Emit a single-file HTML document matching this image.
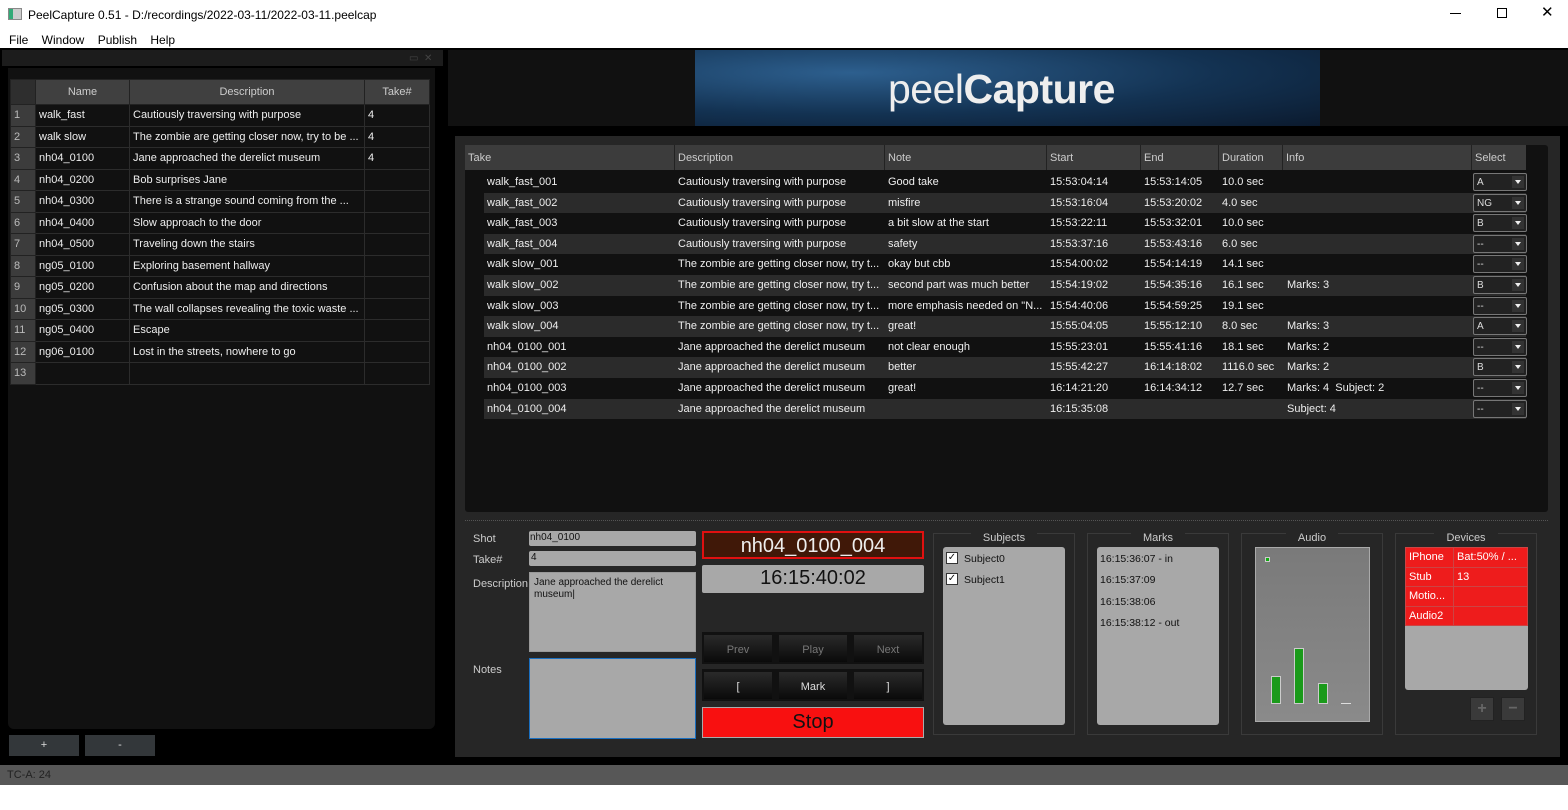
<!DOCTYPE html>
<html><head><meta charset="utf-8"><style>
*{box-sizing:border-box;margin:0;padding:0}
body{width:1568px;height:810px;background:#fff;position:relative;overflow:hidden;font-family:"Liberation Sans",sans-serif;font-size:11px;color:#ddd}
.a{position:absolute}
.t{white-space:nowrap;overflow:hidden}
table{border-collapse:collapse}
.lt td{height:21.5px;border:1px solid #2c2c2c;padding:0 3px;color:#eee;font-size:11px;white-space:nowrap;overflow:hidden}
.lt td.n{background:#3c3c3c;color:#bbb;border-color:#222;width:25px}
.lt th{background:#404040;color:#ccc;font-weight:normal;height:25px;border:1px solid #222}
.row{position:absolute;left:484px;width:1042px;height:20.6px;font-size:11px;color:#eee}
.row span{position:absolute;top:4px;white-space:nowrap}
.row.alt{background:#2b2b2b}
.sel{position:absolute;left:989px;top:1px;width:54px;height:18px;border:1px solid #777;border-radius:2px;background:#222;color:#ddd;font-size:10px;padding:3px 0 0 3px}
.sel:after{content:"";position:absolute;right:2px;top:2px;width:12px;height:12px;background:#333}
.sel:before{content:"";position:absolute;right:5px;top:6px;border:3px solid transparent;border-top:4px solid #eee;z-index:2}
.btn{position:absolute;background:linear-gradient(#2a2a2a,#0a0a0a);border:1px solid #111;color:#777;text-align:center;font-size:11px}
.grp{position:absolute;border:1px solid #3a3a3a;top:533px;height:202px;width:142px}
.grp .ttl{position:absolute;top:-2px;left:0;right:0;text-align:center;color:#ccc;font-size:11px}
.grp .ttl span{background:#262626;padding:0 12px}
.lst{position:absolute;background:#a8a8a8;border-radius:3px;color:#111;font-size:10.5px}
.dev td{height:19.5px;border:1px solid #c44;background:#ee1c1c;color:#fff;font-size:11px;padding:0 3px;white-space:nowrap}
</style></head><body>
<!-- title bar -->
<div class="a" style="left:0;top:0;width:1568px;height:48px;background:#fff;color:#000"></div>
<div class="a" style="left:8px;top:8px;width:14px;height:12px;border:1px solid #888;background:linear-gradient(90deg,#3a7 0 35%,#ccc 35%)"></div>
<div class="a t" style="left:28px;top:8px;color:#000;font-size:12px">PeelCapture 0.51 - D:/recordings/2022-03-11/2022-03-11.peelcap</div>
<div class="a" style="left:1450px;top:13px;width:11px;height:1px;background:#000"></div>
<div class="a" style="left:1497px;top:8px;width:10px;height:10px;border:1px solid #000"></div>
<div class="a" style="left:1541px;top:3px;color:#000;font-size:15px">✕</div>
<div class="a t" style="left:9px;top:33px;color:#000;font-size:12px;word-spacing:0">File &nbsp;&nbsp;&nbsp;Window &nbsp;&nbsp;&nbsp;Publish &nbsp;&nbsp;&nbsp;Help</div>
<!-- dark area -->
<div class="a" style="left:0;top:48px;width:1568px;height:717px;background:#000"></div>
<div class="a" style="left:2px;top:50px;width:441px;height:16px;background:#1c1c1c"></div>
<div class="a" style="left:409px;top:53px;color:#444;font-size:10px">▭ &nbsp;✕</div>
<div class="a" style="left:8px;top:68px;width:427px;height:661px;background:#111;border-radius:0 0 6px 6px"></div>
<table class="lt a" style="left:10px;top:79px;width:419px;table-layout:fixed">
<colgroup><col style="width:25px"><col style="width:94px"><col style="width:235px"><col style="width:65px"></colgroup>
<tr><th style="background:#2e2e2e"></th><th>Name</th><th>Description</th><th>Take#</th></tr>
<tr><td class="n">1</td><td>walk_fast</td><td>Cautiously traversing with purpose</td><td>4</td></tr>
<tr><td class="n">2</td><td>walk slow</td><td>The zombie are getting closer now, try to be ...</td><td>4</td></tr>
<tr><td class="n">3</td><td>nh04_0100</td><td>Jane approached the derelict museum</td><td>4</td></tr>
<tr><td class="n">4</td><td>nh04_0200</td><td>Bob surprises Jane</td><td></td></tr>
<tr><td class="n">5</td><td>nh04_0300</td><td>There is a strange sound coming from the ...</td><td></td></tr>
<tr><td class="n">6</td><td>nh04_0400</td><td>Slow approach to the door</td><td></td></tr>
<tr><td class="n">7</td><td>nh04_0500</td><td>Traveling down the stairs</td><td></td></tr>
<tr><td class="n">8</td><td>ng05_0100</td><td>Exploring basement hallway</td><td></td></tr>
<tr><td class="n">9</td><td>ng05_0200</td><td>Confusion about the map and directions</td><td></td></tr>
<tr><td class="n">10</td><td>ng05_0300</td><td>The wall collapses revealing the toxic waste ...</td><td></td></tr>
<tr><td class="n">11</td><td>ng05_0400</td><td>Escape</td><td></td></tr>
<tr><td class="n">12</td><td>ng06_0100</td><td>Lost in the streets, nowhere to go</td><td></td></tr>
<tr><td class="n">13</td><td></td><td></td><td></td></tr>
</table>
<div class="a" style="left:9px;top:735px;width:70px;height:21px;background:#33373a;color:#ddd;text-align:center;padding-top:4px">+</div>
<div class="a" style="left:85px;top:735px;width:70px;height:21px;background:#33373a;color:#ddd;text-align:center;padding-top:4px">-</div>
<!-- logo -->
<div class="a" style="left:448px;top:50px;width:1120px;height:76px;background:#111"></div>
<div class="a" style="left:695px;top:50px;width:625px;height:76px;background:radial-gradient(ellipse at 25% 30%,#2d5f8e,#133252 55%,#0b1a2e)"></div>
<div class="a t" style="left:888px;top:66px;color:#eee;font-size:41px;letter-spacing:-0.5px">peel<b>Capture</b></div>
<!-- main panel -->
<div class="a" style="left:455px;top:136px;width:1105px;height:621px;background:#262626"></div>
<div class="a" style="left:465px;top:145px;width:1083px;height:367px;background:#111;border-radius:3px"></div>
<div class="a" style="left:465px;top:145px;width:1061px;height:25px;background:#3c3c3c"></div>
<div class="a t" style="left:465px;top:145px;height:25px;width:1061px;color:#ccc;font-size:11px">
<span class="a" style="left:3px;top:7px">Take</span>
<span class="a" style="left:209px;top:0;height:25px;border-left:1px solid #222;padding:7px 3px">Description</span>
<span class="a" style="left:419px;top:0;height:25px;border-left:1px solid #222;padding:7px 3px">Note</span>
<span class="a" style="left:581px;top:0;height:25px;border-left:1px solid #222;padding:7px 3px">Start</span>
<span class="a" style="left:675px;top:0;height:25px;border-left:1px solid #222;padding:7px 3px">End</span>
<span class="a" style="left:753px;top:0;height:25px;border-left:1px solid #222;padding:7px 3px">Duration</span>
<span class="a" style="left:817px;top:0;height:25px;border-left:1px solid #222;padding:7px 3px">Info</span>
<span class="a" style="left:1006px;top:0;height:25px;border-left:1px solid #222;padding:7px 3px">Select</span>
</div>
<div class="row" style="top:172px"><span style="left:3px">walk_fast_001</span><span style="left:194px">Cautiously traversing with purpose</span><span style="left:404px">Good take</span><span style="left:566px">15:53:04:14</span><span style="left:660px">15:53:14:05</span><span style="left:738px">10.0 sec</span><div class="sel">A</div></div>
<div class="row alt" style="top:192.6px"><span style="left:3px">walk_fast_002</span><span style="left:194px">Cautiously traversing with purpose</span><span style="left:404px">misfire</span><span style="left:566px">15:53:16:04</span><span style="left:660px">15:53:20:02</span><span style="left:738px">4.0 sec</span><div class="sel">NG</div></div>
<div class="row" style="top:213.2px"><span style="left:3px">walk_fast_003</span><span style="left:194px">Cautiously traversing with purpose</span><span style="left:404px">a bit slow at the start</span><span style="left:566px">15:53:22:11</span><span style="left:660px">15:53:32:01</span><span style="left:738px">10.0 sec</span><div class="sel">B</div></div>
<div class="row alt" style="top:233.8px"><span style="left:3px">walk_fast_004</span><span style="left:194px">Cautiously traversing with purpose</span><span style="left:404px">safety</span><span style="left:566px">15:53:37:16</span><span style="left:660px">15:53:43:16</span><span style="left:738px">6.0 sec</span><div class="sel">--</div></div>
<div class="row" style="top:254.4px"><span style="left:3px">walk slow_001</span><span style="left:194px">The zombie are getting closer now, try t...</span><span style="left:404px">okay but cbb</span><span style="left:566px">15:54:00:02</span><span style="left:660px">15:54:14:19</span><span style="left:738px">14.1 sec</span><div class="sel">--</div></div>
<div class="row alt" style="top:275px"><span style="left:3px">walk slow_002</span><span style="left:194px">The zombie are getting closer now, try t...</span><span style="left:404px">second part was much better</span><span style="left:566px">15:54:19:02</span><span style="left:660px">15:54:35:16</span><span style="left:738px">16.1 sec</span><span style="left:803px">Marks: 3</span><div class="sel">B</div></div>
<div class="row" style="top:295.6px"><span style="left:3px">walk slow_003</span><span style="left:194px">The zombie are getting closer now, try t...</span><span style="left:404px">more emphasis needed on "N...</span><span style="left:566px">15:54:40:06</span><span style="left:660px">15:54:59:25</span><span style="left:738px">19.1 sec</span><div class="sel">--</div></div>
<div class="row alt" style="top:316.2px"><span style="left:3px">walk slow_004</span><span style="left:194px">The zombie are getting closer now, try t...</span><span style="left:404px">great!</span><span style="left:566px">15:55:04:05</span><span style="left:660px">15:55:12:10</span><span style="left:738px">8.0 sec</span><span style="left:803px">Marks: 3</span><div class="sel">A</div></div>
<div class="row" style="top:336.8px"><span style="left:3px">nh04_0100_001</span><span style="left:194px">Jane approached the derelict museum</span><span style="left:404px">not clear enough</span><span style="left:566px">15:55:23:01</span><span style="left:660px">15:55:41:16</span><span style="left:738px">18.1 sec</span><span style="left:803px">Marks: 2</span><div class="sel">--</div></div>
<div class="row alt" style="top:357.4px"><span style="left:3px">nh04_0100_002</span><span style="left:194px">Jane approached the derelict museum</span><span style="left:404px">better</span><span style="left:566px">15:55:42:27</span><span style="left:660px">16:14:18:02</span><span style="left:738px">1116.0 sec</span><span style="left:803px">Marks: 2</span><div class="sel">B</div></div>
<div class="row" style="top:378px"><span style="left:3px">nh04_0100_003</span><span style="left:194px">Jane approached the derelict museum</span><span style="left:404px">great!</span><span style="left:566px">16:14:21:20</span><span style="left:660px">16:14:34:12</span><span style="left:738px">12.7 sec</span><span style="left:803px">Marks: 4 &nbsp;Subject: 2</span><div class="sel">--</div></div>
<div class="row alt" style="top:398.6px"><span style="left:3px">nh04_0100_004</span><span style="left:194px">Jane approached the derelict museum</span><span style="left:566px">16:15:35:08</span><span style="left:803px">Subject: 4</span><div class="sel">--</div></div>
<div class="a" style="left:465px;top:520px;width:1083px;border-top:1px dotted #555"></div>
<!-- shot form -->
<div class="a" style="left:473px;top:533px;color:#ccc">Shot</div>
<div class="a" style="left:473px;top:554px;color:#ccc">Take#</div>
<div class="a" style="left:473px;top:578px;color:#ccc">Description</div>
<div class="a" style="left:473px;top:664px;color:#ccc">Notes</div>
<div class="a" style="left:529px;top:531px;width:167px;height:15px;background:#a8a8a8;border-radius:2px;color:#111;font-size:10px;padding:1px 1px">nh04_0100</div>
<div class="a" style="left:529px;top:551px;width:167px;height:15px;background:#a8a8a8;border-radius:2px;color:#111;font-size:10px;padding:1px 2px">4</div>
<div class="a" style="left:529px;top:572px;width:167px;height:80px;background:#a8a8a8;border:1px solid #999;color:#111;font-size:10px;padding:4px 4px;line-height:12px">Jane approached the derelict museum|</div>
<div class="a" style="left:529px;top:658px;width:167px;height:81px;background:#a8a8a8;border:1px solid #1a6fc0"></div>
<div class="a" style="left:702px;top:531px;width:222px;height:28px;background:#401808;border:2px solid #e01010;color:#eee;font-size:20px;text-align:center;padding-top:2px">nh04_0100_004</div>
<div class="a" style="left:702px;top:565px;width:222px;height:28px;background:#a8a8a8;border-radius:2px;color:#111;font-size:20px;text-align:center;padding-top:2px">16:15:40:02</div>
<div class="a" style="left:702px;top:632px;width:222px;height:32px;background:#111"></div>
<div class="btn" style="left:703px;top:634px;width:70px;height:29px;padding-top:9px">Prev</div>
<div class="btn" style="left:778px;top:634px;width:70px;height:29px;padding-top:9px">Play</div>
<div class="btn" style="left:853px;top:634px;width:70px;height:29px;padding-top:9px">Next</div>
<div class="a" style="left:702px;top:669px;width:222px;height:32px;background:#111"></div>
<div class="btn" style="left:703px;top:671px;width:70px;height:29px;padding-top:9px;color:#ddd">[</div>
<div class="btn" style="left:778px;top:671px;width:70px;height:29px;padding-top:9px;color:#ddd">Mark</div>
<div class="btn" style="left:853px;top:671px;width:70px;height:29px;padding-top:9px;color:#ddd">]</div>
<div class="a" style="left:702px;top:707px;width:222px;height:31px;background:#f81010;border:1px solid #aaa;color:#111;font-size:20px;text-align:center;padding-top:3px">Stop</div>
<!-- groups -->
<div class="grp" style="left:933px"><div class="ttl"><span>Subjects</span></div></div>
<div class="lst" style="left:943px;top:547px;width:122px;height:178px">
<div class="a" style="left:3px;top:5px;width:12px;height:12px;border:1px solid #333;background:#fff;color:#111;font-size:10px;line-height:10px;text-align:center">✓</div><div class="a" style="left:21px;top:6px">Subject0</div>
<div class="a" style="left:3px;top:26px;width:12px;height:12px;border:1px solid #333;background:#fff;color:#111;font-size:10px;line-height:10px;text-align:center">✓</div><div class="a" style="left:21px;top:27px">Subject1</div>
</div>
<div class="grp" style="left:1087px"><div class="ttl"><span>Marks</span></div></div>
<div class="lst" style="left:1097px;top:547px;width:122px;height:178px">
<div class="a" style="left:3px;top:6px">16:15:36:07 - in</div>
<div class="a" style="left:3px;top:27px">16:15:37:09</div>
<div class="a" style="left:3px;top:49px">16:15:38:06</div>
<div class="a" style="left:3px;top:70px">16:15:38:12 - out</div>
</div>
<div class="grp" style="left:1241px"><div class="ttl"><span>Audio</span></div></div>
<div class="a" style="left:1255px;top:547px;width:115px;height:175px;background:linear-gradient(#7a7a7a,#8a8a8a);border:1px solid #aaa"></div>
<div class="a" style="left:1265px;top:557px;width:5px;height:5px;background:#1a1;border:1px solid #ccc"></div>
<div class="a" style="left:1271px;top:676px;width:10px;height:28px;background:#1a9a1a;border:1px solid #ccc"></div>
<div class="a" style="left:1294px;top:648px;width:10px;height:56px;background:#1a9a1a;border:1px solid #ccc"></div>
<div class="a" style="left:1318px;top:683px;width:10px;height:21px;background:#1a9a1a;border:1px solid #ccc"></div>
<div class="a" style="left:1341px;top:703px;width:10px;height:1px;background:#ddd"></div>
<div class="grp" style="left:1395px"><div class="ttl"><span>Devices</span></div></div>
<div class="a" style="left:1405px;top:547px;width:123px;height:143px;background:#a8a8a8;border-radius:3px"></div>
<table class="dev a" style="left:1405px;top:547px;width:123px;table-layout:fixed"><colgroup><col style="width:48px"><col></colgroup>
<tr><td>IPhone</td><td>Bat:50% / ...</td></tr><tr><td>Stub</td><td>13</td></tr><tr><td>Motio...</td><td></td></tr><tr><td>Audio2</td><td></td></tr></table>
<div class="a" style="left:1470px;top:697px;width:24px;height:24px;background:#3a3a3a;border:1px solid #222;color:#666;text-align:center;font-size:16px;font-weight:bold;line-height:22px">+</div>
<div class="a" style="left:1501px;top:697px;width:24px;height:24px;background:#3a3a3a;border:1px solid #222;color:#666;text-align:center;font-size:16px;font-weight:bold;line-height:22px">−</div>
<!-- status -->
<div class="a" style="left:0;top:765px;width:1568px;height:20px;background:#575757;color:#222;padding:4px 7px">TC-A: 24</div>
</body></html>
